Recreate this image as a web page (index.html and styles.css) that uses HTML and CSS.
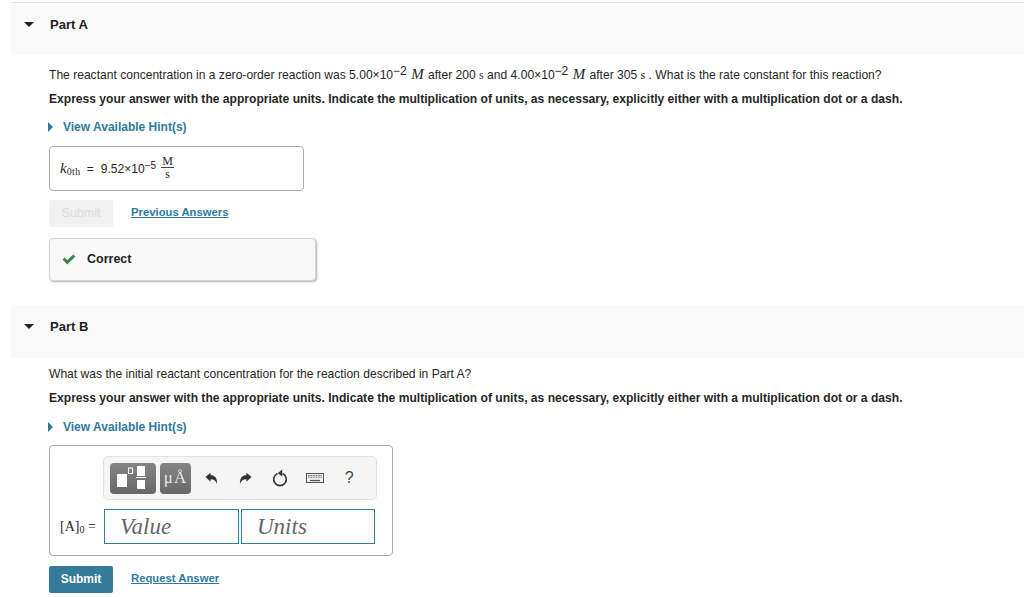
FILE: index.html
```html
<!DOCTYPE html>
<html lang="en">
<head>
    <meta charset="UTF-8">
    <title>Part A and Part B</title>
    <link rel="stylesheet" href="styles.css">
</head>
<body>

<section class="part part-a">
    <div class="part-header">
        <span class="caret-down"></span>
        <h2 class="part-title">Part A</h2>
    </div>
    <div class="part-body">
        <p class="prompt">The reactant concentration in a zero-order reaction was 5.00×10<sup>−2</sup> <i class="math">M</i> after 200 <span class="serif">s</span> and 4.00×10<sup>−2</sup> <i class="math">M</i> after 305 <span class="serif">s</span> . What is the rate constant for this reaction?</p>
        <p class="instructions">Express your answer with the appropriate units. Indicate the multiplication of units, as necessary, explicitly either with a multiplication dot or a dash.</p>
        <a class="hint" href="#"><span class="caret-right"></span>View Available Hint(s)</a>

        <div class="answer-box answer-done">
            <span class="serif label"><i>k</i><span class="sub">0th</span></span>
            <span class="equals">=</span>
            <span>9.52×10<sup class="small-sup">−5</sup></span>
            <span class="fraction serif"><span class="numerator">M</span><span>s</span></span>
        </div>

        <div class="actions">
            <button class="submit-button" disabled>Submit</button>
            <a class="action-link" href="#">Previous Answers</a>
        </div>

        <div class="feedback">
            <svg class="check" width="14" height="11" viewBox="0 0 14 11">
                <path d="M0.6 5.6 L2.6 3.6 L5.2 6.2 L11.2 0.4 L13.4 2.4 L5.2 10.4 Z" fill="#3c8545"/>
            </svg>
            <span>Correct</span>
        </div>
    </div>
</section>

<section class="part part-b">
    <div class="part-header">
        <span class="caret-down"></span>
        <h2 class="part-title">Part B</h2>
    </div>
    <div class="part-body">
        <p class="prompt">What was the initial reactant concentration for the reaction described in Part A?</p>
        <p class="instructions">Express your answer with the appropriate units. Indicate the multiplication of units, as necessary, explicitly either with a multiplication dot or a dash.</p>
        <a class="hint" href="#"><span class="caret-right"></span>View Available Hint(s)</a>

        <div class="answer-box answer-open">
            <div class="toolbar">
                <div class="tool-button tool-templates">
                    <svg width="36" height="24" viewBox="0 0 36 24">
                        <rect x="2" y="8" width="10" height="13" fill="#fff"/>
                        <rect x="13.5" y="2" width="4" height="5.5" fill="none" stroke="#fff" stroke-width="1"/>
                        <rect x="22" y="0" width="8" height="10" fill="#fff"/>
                        <rect x="21" y="11" width="10" height="1" fill="#fff"/>
                        <rect x="22" y="14" width="8" height="9" fill="#fff"/>
                    </svg>
                </div>
                <div class="tool-button tool-units">μÅ</div>
                <div class="tool-icons">
                    <div class="tool-icon">
                        <svg width="13" height="13" viewBox="0 0 14 14">
                            <path d="M0.5 5.5 L6 0.8 V3.6 C10.5 3.6 13.2 6.4 13 13 C11.8 9.4 10 7.8 6 7.8 V10.4 Z" fill="#333"/>
                        </svg>
                    </div>
                    <div class="tool-icon">
                        <svg width="13" height="13" viewBox="0 0 14 14">
                            <path d="M13.5 5.5 L8 0.8 V3.6 C3.5 3.6 0.8 6.4 1 13 C2.2 9.4 4 7.8 8 7.8 V10.4 Z" fill="#333"/>
                        </svg>
                    </div>
                    <div class="tool-icon">
                        <svg width="16" height="18" viewBox="0 0 16 18">
                            <path d="M5.4 4.6 A6.3 6.3 0 1 0 10.6 4.6" fill="none" stroke="#333" stroke-width="1.6"/>
                            <path d="M10.2 0.6 L10.2 7.6 L5.8 4.2 Z" fill="#333"/>
                        </svg>
                    </div>
                    <div class="tool-icon">
                        <svg width="18" height="10" viewBox="0 0 18 10">
                            <rect x="0.5" y="0.5" width="17" height="9" fill="#eee" stroke="#555"/>
                            <path d="M2 2.5 H16 M2 4.2 H16" stroke="#666" stroke-width="1" stroke-dasharray="1 0.6"/>
                            <path d="M4 7.5 H14" stroke="#555" stroke-width="1.2"/>
                        </svg>
                    </div>
                    <div class="tool-icon tool-help">?</div>
                </div>
            </div>
            <div class="input-row">
                <span class="serif input-label">[A]<span class="sub-a">0</span> =</span>
                <div class="math-input">Value</div>
                <div class="math-input">Units</div>
            </div>
        </div>

        <div class="actions">
            <button class="submit-button">Submit</button>
            <a class="action-link" href="#">Request Answer</a>
        </div>
    </div>
</section>

</body>
</html>
```

FILE: styles.css
```css
body {
    font-family: 'Liberation Sans', Arial, sans-serif;
    font-size: 12.08px;
    color: #272727;
    background: #fff;
    margin: 0;
    height: 597px;
    overflow: hidden;
}

.part {
    margin-left: 11px;
}

.part-a {
    padding-top: 2px;
}

.part-b {
    margin-top: 24px;
}

.part-header {
    display: flex;
    align-items: center;
    height: 53px;
    padding-bottom: 9px;
    box-sizing: border-box;
    background: #f9f9f9;
}

.part-a .part-header {
    border-top: 1px solid #e2e2e2;
}

.part-b .part-header {
    padding-bottom: 10px;
}

.caret-down {
    width: 0;
    height: 0;
    margin-left: 13px;
    border-left: 5px solid transparent;
    border-right: 5px solid transparent;
    border-top: 5px solid #222;
}

.part-title {
    margin: 0 0 0 16px;
    font-size: 13px;
    font-weight: bold;
    color: #222;
}

.part-body {
    padding-left: 38px;
}

.prompt {
    margin: 0;
    height: 24px;
    line-height: 24px;
    padding-top: 7px;
    margin-bottom: 1px;
    white-space: nowrap;
}

.part-b .prompt {
    padding-top: 4px;
    margin-bottom: 0;
}

.prompt sup {
    font-size: 12px;
    line-height: 0;
    vertical-align: 4px;
}

.math {
    font-family: 'Liberation Serif', serif;
    font-size: 15px;
    margin: 0 1px;
}

.serif {
    font-family: 'Liberation Serif', serif;
}

.instructions {
    margin: 0;
    height: 24px;
    line-height: 24px;
    font-weight: bold;
    white-space: nowrap;
}

.hint {
    display: flex;
    align-items: center;
    height: 32px;
    font-size: 12px;
    font-weight: bold;
    color: #2f7a9c;
    text-decoration: none;
}

.part-b .hint {
    padding-top: 1px;
    height: 31px;
}

.caret-right {
    width: 0;
    height: 0;
    margin-left: -1px;
    margin-right: 10px;
    border-top: 5px solid transparent;
    border-bottom: 5px solid transparent;
    border-left: 5px solid #2f7a9c;
}

.answer-box {
    box-sizing: border-box;
    border: 1px solid #aaa;
    border-radius: 4px;
    background: #fff;
}

.answer-done {
    display: flex;
    align-items: center;
    width: 255px;
    height: 45px;
    margin-top: 3px;
    padding-left: 10px;
}

.label {
    font-size: 15px;
}

.sub {
    font-size: 10px;
    vertical-align: -2px;
    letter-spacing: 0.4px;
}

.equals {
    margin: 0 7px 0 6px;
}

.small-sup {
    font-size: 10px;
    line-height: 0;
    vertical-align: 4px;
}

.fraction {
    display: inline-flex;
    flex-direction: column;
    align-items: center;
    margin-left: 5px;
    font-size: 12px;
    line-height: 12px;
    margin-top: -2px;
}

.numerator {
    border-bottom: 1px solid #444;
    padding: 0 1px;
}

.actions {
    display: flex;
    align-items: center;
    margin-top: 9px;
}

.part-b .actions {
    margin-top: 10px;
}

.submit-button {
    width: 64px;
    height: 27px;
    padding: 0 0 2px;
    border: none;
    border-radius: 2px;
    background: #337a9b;
    color: #fff;
    font-family: inherit;
    font-size: 12px;
    font-weight: bold;
}

.submit-button:disabled {
    background: #f1f1f1;
    color: #dcdcdc;
    font-size: 12.5px;
    font-weight: normal;
}

.action-link {
    margin-left: 18px;
    margin-top: -3px;
    font-size: 11.3px;
    font-weight: bold;
    color: #2f7a9c;
}

.feedback {
    display: flex;
    align-items: center;
    box-sizing: border-box;
    width: 267px;
    height: 43px;
    margin-top: 11px;
    padding-left: 12px;
    padding-bottom: 1px;
    border: 1px solid #d4d4d4;
    border-radius: 4px;
    background: #f8f8f8;
    box-shadow: 1px 1px 2px rgba(0, 0, 0, 0.3);
    font-size: 12.5px;
    font-weight: bold;
    color: #222;
}

.check {
    margin-right: 11px;
}

.answer-open {
    width: 344px;
    height: 111px;
    margin-top: 3px;
    padding: 10px 15px 0 10px;
}

.toolbar {
    display: flex;
    align-items: center;
    box-sizing: border-box;
    width: 274px;
    height: 44px;
    margin-left: 43px;
    padding-left: 6px;
    border: 1px solid #e2e2e2;
    border-radius: 5px;
    background: #f5f5f5;
}

.tool-button {
    display: flex;
    align-items: center;
    justify-content: center;
    height: 31px;
    border-radius: 4px;
    background: linear-gradient(#848484, #686868);
    color: #fff;
}

.tool-templates {
    width: 46px;
}

.tool-units {
    width: 31px;
    margin-left: 4px;
    font-family: 'Liberation Serif', serif;
    font-size: 17px;
    letter-spacing: 1px;
    color: #e6e6e6;
}

.tool-icons {
    display: flex;
    align-items: center;
    margin-left: 3px;
}

.tool-icon {
    display: flex;
    align-items: center;
    justify-content: center;
    width: 34.5px;
}

.tool-help {
    font-size: 16px;
    color: #444;
}

.input-row {
    display: flex;
    align-items: center;
    margin-top: 9px;
}

.input-label {
    width: 44px;
    font-size: 14px;
    white-space: nowrap;
}

.sub-a {
    font-size: 10px;
    vertical-align: -2px;
}

.math-input {
    box-sizing: border-box;
    width: 135px;
    height: 35px;
    margin-right: 2px;
    padding-left: 15px;
    border: 1px solid #337a9b;
    font-family: 'Liberation Serif', serif;
    font-size: 23px;
    font-style: italic;
    line-height: 33px;
    color: #666;
}

.math-input + .math-input {
    width: 134px;
    margin-right: 0;
}
```
